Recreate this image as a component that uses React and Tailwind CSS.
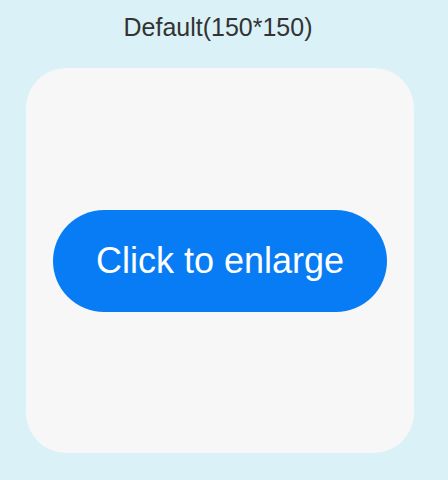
import React from 'react';

const App = () => {
  return (
    <div
      className="w-[448px] h-[480px] bg-[#daf1f7] overflow-hidden"
      style={{ fontFamily: '"Liberation Sans", Arial, sans-serif' }}
    >
      {/* Title */}
      <div className="w-[388px] ml-[24px] pt-[13px] text-center text-[25px] leading-[28px] text-[#333333]">
        Default(150*150)
      </div>

      {/* Card */}
      <div className="w-[388px] h-[385px] ml-[26px] mt-[27px] bg-[#f7f7f7] rounded-[40px] flex items-center justify-center">
        <button className="w-[334px] h-[102px] rounded-full bg-[#077cf4] text-white text-[36px] leading-none">
          Click to enlarge
        </button>
      </div>
    </div>
  );
};

export default App;
